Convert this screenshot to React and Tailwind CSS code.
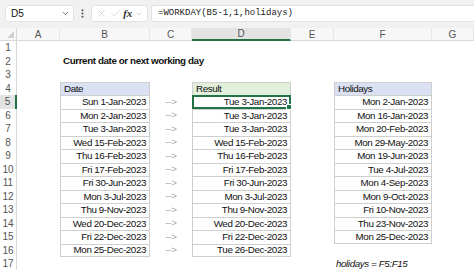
import React from "react";
import { X, Check, ChevronDown, EllipsisVertical } from "lucide-react";

const dates = [
  "Sun 1-Jan-2023",
  "Mon 2-Jan-2023",
  "Tue 3-Jan-2023",
  "Wed 15-Feb-2023",
  "Thu 16-Feb-2023",
  "Fri 17-Feb-2023",
  "Fri 30-Jun-2023",
  "Mon 3-Jul-2023",
  "Thu 9-Nov-2023",
  "Wed 20-Dec-2023",
  "Fri 22-Dec-2023",
  "Mon 25-Dec-2023",
];

const results = [
  "Tue 3-Jan-2023",
  "Tue 3-Jan-2023",
  "Tue 3-Jan-2023",
  "Wed 15-Feb-2023",
  "Thu 16-Feb-2023",
  "Fri 17-Feb-2023",
  "Fri 30-Jun-2023",
  "Mon 3-Jul-2023",
  "Thu 9-Nov-2023",
  "Wed 20-Dec-2023",
  "Fri 22-Dec-2023",
  "Tue 26-Dec-2023",
];

const holidays = [
  "Mon 2-Jan-2023",
  "Mon 16-Jan-2023",
  "Mon 20-Feb-2023",
  "Mon 29-May-2023",
  "Mon 19-Jun-2023",
  "Tue 4-Jul-2023",
  "Mon 4-Sep-2023",
  "Mon 9-Oct-2023",
  "Fri 10-Nov-2023",
  "Thu 23-Nov-2023",
  "Mon 25-Dec-2023",
];

const cols = ["A", "B", "C", "D", "E", "F", "G"];
const rows = Array.from({ length: 17 }, (_, i) => i + 1);

// one bordered cell inside a little table
const TableCell = ({ text, head, bg, last }) => (
  <div
    className={`h-full flex items-center px-[3px] border-l border-r border-t border-[#cfcfcf] ${
      last ? "border-b" : ""
    } ${head ? "justify-start" : "justify-end"} ${bg || "bg-white"}`}
  >
    <span className="leading-none">{text}</span>
  </div>
);

const cellFor = (r, c) => {
  // B column: Date table
  if (c === "B") {
    if (r === 4) return <TableCell text="Date" head bg="bg-[#d9e1f2]" />;
    if (r >= 5 && r <= 16)
      return <TableCell text={dates[r - 5]} last={r === 16} />;
  }
  if (c === "C" && r >= 5 && r <= 16)
    return (
      <div className="h-full flex items-center justify-center text-[#a8a8a8]">
        <span className="leading-none">--&gt;</span>
      </div>
    );
  if (c === "D") {
    if (r === 4) return <TableCell text="Result" head bg="bg-[#e2efda]" />;
    if (r === 5)
      return (
        <div className="relative h-full flex items-center justify-end px-[2px] border-2 border-[#217346] bg-white">
          <span className="leading-none">{results[0]}</span>
          <div className="absolute -right-[3px] -bottom-[3px] w-[4px] h-[4px] bg-[#217346] border border-white box-content" />
        </div>
      );
    if (r >= 6 && r <= 16)
      return <TableCell text={results[r - 5]} last={r === 16} />;
  }
  if (c === "F") {
    if (r === 4) return <TableCell text="Holidays" head bg="bg-[#d9e1f2]" />;
    if (r >= 5 && r <= 15)
      return <TableCell text={holidays[r - 5]} last={r === 15} />;
    if (r === 17)
      return (
        <div className="h-full flex items-center pl-[2px] italic whitespace-nowrap">
          <span className="leading-none">holidays = F5:F15</span>
        </div>
      );
  }
  if (c === "B" && r === 2)
    return (
      <div className="h-full flex items-center pl-[3px] font-bold whitespace-nowrap">
        <span className="leading-none">Current date or next working day</span>
      </div>
    );
  return <div className="h-full" />;
};

export default function App() {
  return (
    <div className="w-[474px] h-[270px] overflow-hidden bg-white text-[#111] font-['Liberation_Sans',Arial,sans-serif] text-[9.8px] tracking-[-0.4px]">
      {/* Formula bar */}
      <div className="h-[28px] bg-[#f1f1f1] flex items-center gap-[3px] pl-[5px] pb-[1px]">
        <div className="w-[69px] h-[17px] bg-white border border-[#e2e2e2] rounded-[3px] flex items-center justify-between pl-[5px] pr-[3px]">
          <span className="text-[10px] tracking-normal">D5</span>
          <ChevronDown size={9} strokeWidth={2} className="text-[#444]" />
        </div>
        <div className="w-[11px] flex justify-center text-[#555]">
          <EllipsisVertical size={11} strokeWidth={2.5} />
        </div>
        <div className="w-[57px] h-[17px] bg-white border border-[#e2e2e2] rounded-[3px] flex items-center justify-around px-[3px]">
          <X size={11} strokeWidth={1.3} className="text-[#c0c0c0]" />
          <Check size={11} strokeWidth={1.3} className="text-[#c0c0c0]" />
          <span className="font-['Liberation_Serif',serif] italic font-bold text-[11px] text-[#333] tracking-normal">
            fx
          </span>
          <ChevronDown size={8} strokeWidth={1.5} className="text-[#999]" />
        </div>
        <div className="flex-1 h-[17px] bg-white border border-[#e2e2e2] rounded-l-[3px] border-r-0 flex items-center pl-[6px]">
          <span className="font-['Liberation_Mono',monospace] text-[9px] tracking-normal text-[#222]">
            =WORKDAY(B5-1,1,holidays)
          </span>
        </div>
      </div>

      {/* Sheet */}
      <div className="grid grid-cols-[17px_43px_90px_42px_99px_43px_98px_1fr] grid-rows-[13px] auto-rows-[13.5px]">
        {/* Column headers */}
        <div className="relative bg-[#f7f7f7] border-b border-r border-[#d8d8d8]">
          <svg
            width="7"
            height="7"
            viewBox="0 0 7 7"
            className="absolute right-[2px] bottom-[2px]"
          >
            <path d="M7 0 L7 7 L0 7 Z" fill="#cfcfcf" />
          </svg>
        </div>
        {cols.map((c) => (
          <div
            key={c}
            className={`flex items-center justify-center text-[10px] text-[#555] tracking-normal ${
              c === "D"
                ? "bg-[#e3e3e3] border-b-2 border-[#217346]"
                : "bg-[#f7f7f7] border-b border-[#d8d8d8]"
            } border-r border-r-[#e6e6e6]`}
          >
            {c}
          </div>
        ))}

        {rows.map((r) => (
          <React.Fragment key={r}>
            <div
              className={`flex items-center justify-center text-[10px] text-[#555] tracking-normal ${
                r === 5
                  ? "bg-[#e3e3e3] border-r-2 border-[#217346]"
                  : "bg-white border-r border-[#d8d8d8]"
              }`}
            >
              {r}
            </div>
            {cols.map((c) => (
              <div key={c} className="h-[13.5px] whitespace-nowrap">
                {cellFor(r, c)}
              </div>
            ))}
          </React.Fragment>
        ))}
      </div>
    </div>
  );
}
